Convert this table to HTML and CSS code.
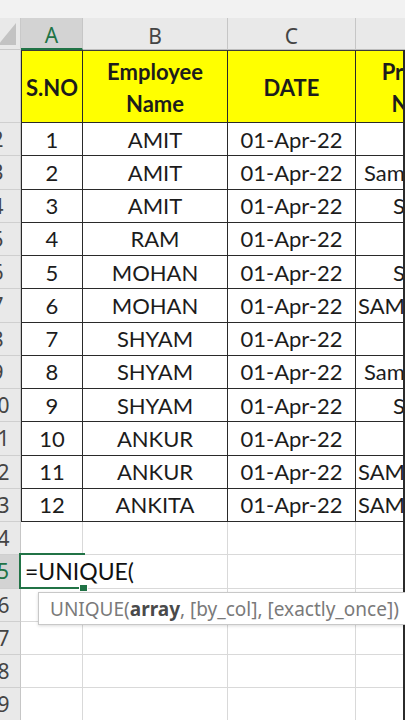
FILE: index.html
```html
<!DOCTYPE html>
<html>
<head>
<meta charset="utf-8">
<link rel="stylesheet" href="styles.css">
</head>
<body>
<div class="page">
  <div class="topbar"></div>
  <div class="sheet">
    <div class="corner"><svg width="18" height="22" viewBox="0 0 18 22"><polygon points="0,22 18,22 18,0" fill="#c3c3c3"/></svg></div>
    <div class="colhdr sel">A</div>
    <div class="colhdr">B</div>
    <div class="colhdr">C</div>
    <div class="colhdr">D</div>

    <div class="rowhdr tall">1</div>
    <div class="cell t a hd">S.NO</div>
    <div class="cell t hd">Employee<br>Name</div>
    <div class="cell t hd">DATE</div>
    <div class="cell t hd dh">Product<br>Name</div>

    <div class="rowhdr">2</div>
    <div class="cell t a">1</div><div class="cell t">AMIT</div><div class="cell t">01-Apr-22</div><div class="cell t d"><span class="out">LG</span></div>
    <div class="rowhdr">3</div>
    <div class="cell t a">2</div><div class="cell t">AMIT</div><div class="cell t">01-Apr-22</div><div class="cell t d"><span class="mid">Samsung</span></div>
    <div class="rowhdr">4</div>
    <div class="cell t a">3</div><div class="cell t">AMIT</div><div class="cell t">01-Apr-22</div><div class="cell t d"><span class="far">Sony</span></div>
    <div class="rowhdr">5</div>
    <div class="cell t a">4</div><div class="cell t">RAM</div><div class="cell t">01-Apr-22</div><div class="cell t d"><span class="out">LG</span></div>
    <div class="rowhdr">6</div>
    <div class="cell t a">5</div><div class="cell t">MOHAN</div><div class="cell t">01-Apr-22</div><div class="cell t d"><span class="far">Sony</span></div>
    <div class="rowhdr">7</div>
    <div class="cell t a">6</div><div class="cell t">MOHAN</div><div class="cell t">01-Apr-22</div><div class="cell t d"><span class="near">SAMSUNG</span></div>
    <div class="rowhdr">8</div>
    <div class="cell t a">7</div><div class="cell t">SHYAM</div><div class="cell t">01-Apr-22</div><div class="cell t d"><span class="out">LG</span></div>
    <div class="rowhdr">9</div>
    <div class="cell t a">8</div><div class="cell t">SHYAM</div><div class="cell t">01-Apr-22</div><div class="cell t d"><span class="mid">Samsung</span></div>
    <div class="rowhdr">10</div>
    <div class="cell t a">9</div><div class="cell t">SHYAM</div><div class="cell t">01-Apr-22</div><div class="cell t d"><span class="far">Sony</span></div>
    <div class="rowhdr">11</div>
    <div class="cell t a">10</div><div class="cell t">ANKUR</div><div class="cell t">01-Apr-22</div><div class="cell t d"><span class="out">LG</span></div>
    <div class="rowhdr">12</div>
    <div class="cell t a">11</div><div class="cell t">ANKUR</div><div class="cell t">01-Apr-22</div><div class="cell t d"><span class="near">SAMSUNG</span></div>
    <div class="rowhdr">13</div>
    <div class="cell t a">12</div><div class="cell t">ANKITA</div><div class="cell t">01-Apr-22</div><div class="cell t d"><span class="near">SAMSUNG</span></div>

    <div class="rowhdr">14</div>
    <div class="cell"></div><div class="cell"></div><div class="cell"></div><div class="cell"></div>
    <div class="rowhdr selrow">15</div>
    <div class="cell active">=UNIQUE(</div><div class="cell"></div><div class="cell"></div><div class="cell"></div>
    <div class="rowhdr">16</div>
    <div class="cell"></div><div class="cell"></div><div class="cell"></div><div class="cell"></div>
    <div class="rowhdr">17</div>
    <div class="cell"></div><div class="cell"></div><div class="cell"></div><div class="cell"></div>
    <div class="rowhdr">18</div>
    <div class="cell"></div><div class="cell"></div><div class="cell"></div><div class="cell"></div>
    <div class="rowhdr">19</div>
    <div class="cell"></div><div class="cell"></div><div class="cell"></div><div class="cell"></div>
  </div>
  <div class="tooltip">UNIQUE(<b>array</b>, [by_col], [exactly_once])</div>
</div>
</body>
</html>
```

FILE: styles.css
```css
* { box-sizing: border-box; }
html, body { margin: 0; padding: 0; }
body {
  width: 405px;
  height: 720px;
  overflow: hidden;
  background: #ffffff;
  font-family: Lato, "Open Sans", sans-serif;
}
.page {
  position: relative;
  width: 405px;
  height: 720px;
  overflow: hidden;
}
.page::after {
  content: "";
  position: absolute;
  top: 50px;
  right: 0;
  width: 2px;
  height: 670px;
  background: #2b2b2b;
}
.topbar {
  height: 18px;
  background: #f2f2f2;
}
.sheet {
  margin-left: -25px;
  display: grid;
  grid-template-columns: 46px 62px 145px 128px 134px;
  grid-template-rows: 32px 73px repeat(18, 33.25px);
  width: 515px;
}
.corner {
  background: #e9e9e9;
  border-right: 1px solid #c9c9c9;
  border-bottom: 1px solid #c9c9c9;
  display: flex;
  justify-content: flex-end;
  align-items: flex-end;
  padding: 0 4px 4px 0;
}
.corner svg { display: block; }
.colhdr {
  background: #e9e9e9;
  border-right: 1px solid #c6c6c6;
  border-bottom: 1px solid #bdbdbd;
  color: #444444;
  font-family: "Noto Sans", sans-serif;
  font-size: 21px;
  display: flex;
  align-items: center;
  justify-content: center;
  padding-top: 4px;
}
.colhdr.sel {
  background: #d3d3d3;
  color: #217346;
  border-bottom: 2px solid #217346;
}
.rowhdr {
  background: #e9e9e9;
  border-right: 1px solid #c6c6c6;
  border-bottom: 1px solid #cfcfcf;
  color: #444444;
  font-family: "Noto Sans", sans-serif;
  font-size: 21px;
  display: flex;
  align-items: center;
  justify-content: center;
}
.rowhdr.tall {
  align-items: flex-end;
  padding-bottom: 3px;
}
.rowhdr.selrow {
  background: #d3d3d3;
  color: #217346;
  border-right: 2px solid #217346;
}
.cell {
  border-right: 1px solid #d9d9d9;
  border-bottom: 1px solid #d9d9d9;
  color: #1c1c1c;
  font-size: 22px;
  display: flex;
  align-items: center;
  justify-content: center;
  white-space: nowrap;
  overflow: hidden;
}
.cell.t {
  border-right-color: #2a2a2a;
  border-bottom-color: #2a2a2a;
}
.cell.t.a {
  border-left: 1px solid #2a2a2a;
}
.cell.hd {
  background: #ffff00;
  border-top: 1px solid #3a3a3a;
  font-weight: 700;
  line-height: 32px;
  text-align: center;
  padding-top: 3px;
}
.cell.hd.dh {
  padding-right: 4px;
}
.cell.d {
  justify-content: flex-start;
}
.cell.d .near { padding-left: 2px; }
.cell.d .mid { padding-left: 8px; }
.cell.d .far { padding-left: 37px; }
.cell.d .out { padding-left: 60px; }
.cell.active {
  position: relative;
  overflow: visible;
  justify-content: flex-start;
  padding-left: 4px;
  font-size: 23px;
  color: #111111;
  border-right: none;
  z-index: 2;
}
.cell.active::before {
  content: "";
  position: absolute;
  top: -2px;
  left: -2px;
  right: -2px;
  bottom: -1px;
  border: 2px solid #217346;
  border-right: none;
}
.cell.active::after {
  content: "";
  position: absolute;
  right: -5px;
  bottom: -4px;
  width: 7px;
  height: 6px;
  background: #217346;
  border: 1px solid #ffffff;
}
.tooltip {
  position: absolute;
  left: 38px;
  top: 592px;
  width: 372px;
  height: 33px;
  background: #ffffff;
  border: 1px solid #c8c8c8;
  box-shadow: 0 1px 3px rgba(0,0,0,0.15);
  color: #7a7a7a;
  font-family: "Noto Sans", sans-serif;
  font-size: 19px;
  padding-left: 11px;
  display: flex;
  align-items: center;
  white-space: nowrap;
  z-index: 3;
}
.tooltip b {
  color: #4a4a4a;
  font-weight: 700;
}
```
